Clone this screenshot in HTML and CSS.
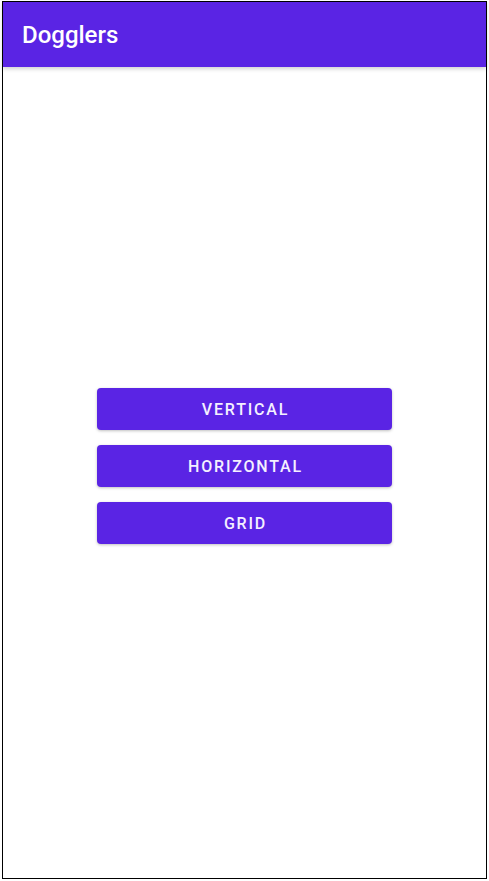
FILE: index.html
```html
<!DOCTYPE html>
<html>
<head>
<meta charset="utf-8">
<link rel="stylesheet" href="styles.css">
</head>
<body>
<div class="frame">
  <header class="appbar"><h1 class="title">Dogglers</h1></header>
  <main class="content">
    <div class="buttons">
      <button class="btn">VERTICAL</button>
      <button class="btn">HORIZONTAL</button>
      <button class="btn">GRID</button>
    </div>
  </main>
</div>
</body>
</html>
```

FILE: styles.css
```css
html, body {
  margin: 0;
  padding: 0;
  background: #fff;
}
body {
  width: 489px;
  height: 881px;
  overflow: hidden;
  font-family: Roboto, "Noto Sans", sans-serif;
}
.frame {
  box-sizing: border-box;
  margin: 1px 2px 0 2px;
  width: 485px;
  height: 878px;
  border: 1px solid #000;
  display: flex;
  flex-direction: column;
  background: #fff;
}
.appbar {
  height: 65px;
  flex: none;
  background: #5a24e4;
  display: flex;
  align-items: center;
  padding-left: 19px;
  box-shadow: 0 2px 4px rgba(0,0,0,0.18);
  position: relative;
  z-index: 1;
}
.title {
  margin: 0;
  color: #fff;
  font-size: 24px;
  font-weight: 500;
  letter-spacing: 0;
  padding-top: 1px;
}
.content {
  flex: 1;
  display: flex;
  align-items: center;
  justify-content: center;
  padding-bottom: 13px;
}
.buttons {
  display: flex;
  flex-direction: column;
  gap: 15px;
}
.btn {
  width: 295px;
  height: 42px;
  border: none;
  border-radius: 4px;
  background: #5a24e4;
  color: #f4f0ff;
  font-family: Roboto, "Noto Sans", sans-serif;
  font-size: 16px;
  font-weight: 500;
  letter-spacing: 1.8px;
  box-shadow: 0 1px 3px rgba(0,0,0,0.25);
  padding: 0 0 0 2px;
}
```
